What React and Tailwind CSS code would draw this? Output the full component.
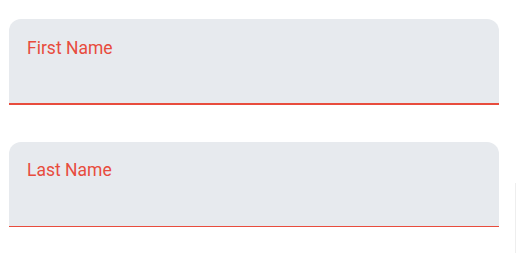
export default function App() {
  return (
    <div className="relative w-[516px] h-[253px] bg-white font-['Roboto',sans-serif] overflow-hidden">
      <div className="flex flex-col gap-[37px] pt-[19px] pl-[9px]">
        <div className="w-[490px] h-[86px] bg-[#e7eaee] rounded-t-[12px] border-b-2 border-[#e84c3d] px-[18px] pt-[17px]">
          <label className="block text-[17.5px] leading-6 text-[#e84c3d]">First Name</label>
        </div>
        <div className="w-[490px] h-[85px] bg-[#e7eaee] rounded-t-[12px] border-b border-[#e84c3d] px-[18px] pt-[16px]">
          <label className="block text-[17.5px] leading-6 text-[#e84c3d]">Last Name</label>
        </div>
      </div>
      {/* faint edge at right */}
      <div className="absolute right-0 top-[183px] bottom-0 w-px bg-[#eeeeee]" />
    </div>
  );
}
